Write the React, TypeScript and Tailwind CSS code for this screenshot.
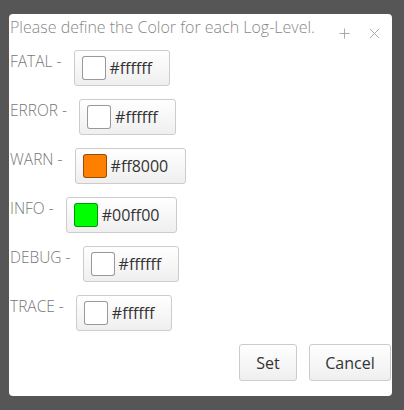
const levels = [
  { name: "FATAL", color: "#ffffff" },
  { name: "ERROR", color: "#ffffff" },
  { name: "WARN", color: "#ff8000" },
  { name: "INFO", color: "#00ff00" },
  { name: "DEBUG", color: "#ffffff" },
  { name: "TRACE", color: "#ffffff" },
];

const font = { fontFamily: '"Open Sans", "Liberation Sans", sans-serif' };

const ColorButton = ({ color }: { color: string }) => (
  <button className="h-[36px] flex items-center pl-[7px] pr-[17px] gap-[4px] rounded-[3px] border border-[#cccccc] bg-gradient-to-b from-white to-[#efefef] text-[16px] leading-[20px] text-[#333333]">
    <span
      className="w-[24px] h-[24px] rounded-[3px] border border-black/40"
      style={{ backgroundColor: color }}
    />
    <span>{color}</span>
  </button>
);

export default function App() {
  return (
    <div className="min-h-[410px] bg-[#565656] pt-[14px] pl-[9px]" style={font}>
      <div className="w-[383px] h-[382px] bg-white rounded-[4px] flex flex-col">
        {/* header */}
        <div className="h-[36px] flex items-start pl-px pt-[3px]">
          <div className="flex-1 text-[16px] leading-[20px] font-light text-[#888888]">
            Please define the Color for each Log-Level.
          </div>
          <div className="flex items-center gap-[19px] pt-[11px] pr-[12px]">
            <svg width="11" height="11" viewBox="0 0 11 11">
              <path d="M5.5 0.5v10M0.5 5.5h10" stroke="#aaaaaa" strokeWidth="1" />
            </svg>
            <svg width="11" height="11" viewBox="0 0 11 11">
              <path d="M1 1l9 9M10 1l-9 9" stroke="#aaaaaa" strokeWidth="1" />
            </svg>
          </div>
        </div>

        {/* levels */}
        <div className="flex flex-col gap-[13px]">
          {levels.map((l) => (
            <div key={l.name} className="flex items-start gap-3 pl-px">
              <span className="pt-px text-[15.5px] leading-[20px] font-light text-[#777777]">
                {l.name} -
              </span>
              <ColorButton color={l.color} />
            </div>
          ))}
        </div>

        {/* footer */}
        <div className="mt-[13px] flex justify-end gap-3 pr-px">
          <button className="w-[58px] h-[37px] rounded-[3px] border border-[#cccccc] bg-gradient-to-b from-white to-[#efefef] text-[16px] text-[#333333]">
            Set
          </button>
          <button className="w-[82px] h-[37px] rounded-[3px] border border-[#cccccc] bg-gradient-to-b from-white to-[#efefef] text-[16px] text-[#333333]">
            Cancel
          </button>
        </div>
      </div>
    </div>
  );
}
